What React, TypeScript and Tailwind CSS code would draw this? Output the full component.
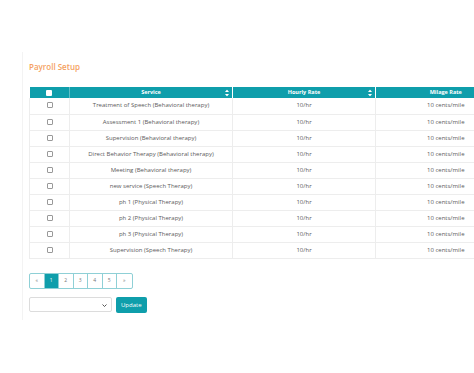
import React from 'react';

const rows = [
  'Treatment of Speech (Behavioral therapy)',
  'Assessment 1 (Behavioral therapy)',
  'Supervision (Behavioral therapy)',
  'Direct Behavior Therapy (Behavioral therapy)',
  'Meeting (Behavioral therapy)',
  'new service (Speech Therapy)',
  'ph 1 (Physical Therapy)',
  'ph 2 (Physical Therapy)',
  'ph 3 (Physical Therapy)',
  'Supervision (Speech Therapy)',
];

function SortIcon() {
  return (
    <svg width="4" height="7" viewBox="0 0 4 7" className="absolute right-[3px] top-1/2 -translate-y-1/2">
      <path d="M2 0 L4 2.6 L0 2.6 Z" fill="#fff" />
      <path d="M2 7 L4 4.4 L0 4.4 Z" fill="#fff" />
    </svg>
  );
}

export default function App() {
  return (
    <div className="w-[474px] h-[373px] bg-white overflow-hidden font-['Open_Sans',sans-serif] text-[#5a5a5a]">
      <div className="ml-[22px] mt-[52px] h-[268px] border-l border-[#f3f3f3] pl-[6px] pt-[10px]">
        <h2 className="h-[10px] text-[8px] leading-[10px] font-semibold text-[#f5a25f]">Payroll Setup</h2>

        <table className="mt-[15px] w-[486px] border-collapse table-fixed text-[6px]">
          <colgroup>
            <col className="w-[40px]" />
            <col className="w-[163px]" />
            <col className="w-[143px]" />
            <col className="w-[140px]" />
          </colgroup>
          <thead>
            <tr className="h-[11px] bg-[#0f9eab] text-white text-[5.5px]">
              <th className="border-r border-[#ffffff55] p-0">
                <div className="mx-auto w-[6px] h-[6px] bg-white rounded-[1px]" />
              </th>
              <th className="relative border-r border-[#ffffff55] p-0 font-bold">
                Service
                <SortIcon />
              </th>
              <th className="relative border-r border-[#ffffff55] p-0 font-bold">
                Hourly Rate
                <SortIcon />
              </th>
              <th className="p-0 font-bold">Milage Rate</th>
            </tr>
          </thead>
          <tbody>
            {rows.map((name) => (
              <tr key={name} className="h-[16px] border-b border-[#ededed]">
                <td className="border-l border-r border-[#ededed] p-0 align-top">
                  <div className="mx-auto mt-[4px] w-[6px] h-[6px] border border-[#999] rounded-[1px] bg-white" />
                </td>
                <td className="border-r border-[#ededed] p-0 text-center">{name}</td>
                <td className="border-r border-[#ededed] p-0 text-center">10/hr</td>
                <td className="p-0 text-center">10 cents/mile</td>
              </tr>
            ))}
          </tbody>
        </table>

        <div className="mt-[14px] flex h-[16px] w-fit border border-[#8fd0d6] rounded-[2px] text-[5px] text-[#777]">
          {['«', '1', '2', '3', '4', '5', '»'].map((p, i) => (
            <div
              key={i}
              className={
                i === 1
                  ? 'w-[14.5px] flex items-center justify-center bg-[#0f9eab] text-white border-r border-[#8fd0d6]'
                  : i === 6
                  ? 'w-[14.5px] flex items-center justify-center'
                  : 'w-[14.5px] flex items-center justify-center border-r border-[#8fd0d6]'
              }
            >
              {p}
            </div>
          ))}
        </div>

        <div className="mt-[8px] flex items-center gap-[4px]">
          <div className="relative w-[83px] h-[15px] border border-[#dcdcdc] rounded-[2px] bg-white">
            <svg width="5" height="3" viewBox="0 0 5 3" className="absolute right-[4px] top-[6px]">
              <path d="M0.5 0.5 L2.5 2.5 L4.5 0.5" stroke="#444" strokeWidth="0.9" fill="none" />
            </svg>
          </div>
          <button className="h-[16px] px-[5px] rounded-[2px] bg-[#0f9eab] text-white text-[6px] leading-none">Update</button>
        </div>
      </div>
    </div>
  );
}
